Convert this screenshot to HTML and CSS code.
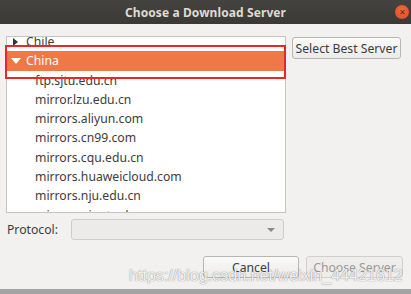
FILE: index.html
```html
<!DOCTYPE html>
<html lang="en">
<head>
    <meta charset="UTF-8">
    <title>Choose a Download Server</title>
    <link rel="stylesheet" href="styles.css">
</head>
<body>
    <div class="window">
        <div class="titlebar">
            <span class="title">Choose a Download Server</span>
            <span class="close">&#x2715;</span>
        </div>
        <div class="content">
            <div class="top-row">
                <div class="server-list">
                    <div class="rows">
                        <div class="row country"><span class="arrow right"></span>Chile</div>
                        <div class="row country selected"><span class="arrow down"></span>China</div>
                        <div class="row mirror">ftp.sjtu.edu.cn</div>
                        <div class="row mirror">mirror.lzu.edu.cn</div>
                        <div class="row mirror">mirrors.aliyun.com</div>
                        <div class="row mirror">mirrors.cn99.com</div>
                        <div class="row mirror">mirrors.cqu.edu.cn</div>
                        <div class="row mirror">mirrors.huaweicloud.com</div>
                        <div class="row mirror">mirrors.nju.edu.cn</div>
                        <div class="row mirror">mirrors.njupt.edu.cn</div>
                    </div>
                    <div class="highlight"></div>
                </div>
                <button class="btn best">Select Best Server</button>
            </div>
            <div class="protocol-row">
                <label class="protocol-label">Protocol:</label>
                <div class="combo"><span class="combo-arrow"></span></div>
            </div>
            <div class="button-row">
                <button class="btn cancel">Cancel</button>
                <button class="btn choose" disabled>Choose Server</button>
            </div>
            <div class="watermark">https://blog.csdn.net/weixin_44421612</div>
        </div>
        <div class="bottom-strip"></div>
    </div>
</body>
</html>
```

FILE: styles.css
```css
body {
    margin: 0;
    padding: 0;
    font-family: "Noto Sans", "Open Sans", sans-serif;
    font-size: 12.2px;
    color: #3c3c3c;
}

.window {
    width: 411px;
    height: 294px;
    background-color: #f2f1f0;
    display: flex;
    flex-direction: column;
    overflow: hidden;
}

.titlebar {
    height: 24px;
    background: linear-gradient(#44433f, #3a3935);
    display: flex;
    align-items: center;
    justify-content: center;
    position: relative;
    flex-shrink: 0;
}

.title {
    color: #dfdbd2;
    font-weight: bold;
    font-size: 12px;
    letter-spacing: 0.1px;
}

.close {
    position: absolute;
    right: 2px;
    top: 5px;
    width: 14px;
    height: 14px;
    border-radius: 50%;
    background: radial-gradient(circle at 50% 40%, #f26b3f, #e0491f);
    color: #5a2a1a;
    font-size: 8px;
    line-height: 14px;
    text-align: center;
}

.content {
    flex: 1;
    position: relative;
    padding: 12px 0 0 6px;
}

.top-row {
    display: flex;
    align-items: flex-start;
    gap: 6px;
}

.server-list {
    width: 278px;
    height: 175px;
    background-color: #fff;
    border: 1px solid #c6c4c1;
    position: relative;
}

.rows {
    height: 100%;
    overflow: hidden;
}

.row {
    height: 19.3px;
    line-height: 19px;
    white-space: nowrap;
}

.row:first-child {
    margin-top: -5px;
}

.country {
    padding-left: 4px;
    display: flex;
    align-items: center;
}

.mirror {
    padding-left: 28px;
}

.selected {
    background-color: #f07746;
    color: #fff;
}

.arrow {
    width: 0;
    height: 0;
    margin-right: 6px;
}

.arrow.right {
    border-top: 4px solid transparent;
    border-bottom: 4px solid transparent;
    border-left: 5px solid #333;
    margin-left: 2px;
    margin-right: 8px;
}

.arrow.down {
    border-left: 5px solid transparent;
    border-right: 5px solid transparent;
    border-top: 6px solid #fff;
    margin-right: 5px;
    margin-top: 1px;
}

.highlight {
    position: absolute;
    left: -2px;
    top: 8px;
    width: 277px;
    height: 30px;
    border: 2px solid #e8262b;
}

.btn {
    font-family: "Noto Sans", "Open Sans", sans-serif;
    font-size: 12.2px;
    color: #3c3c3c;
    height: 22px;
    padding: 0;
    border: 1px solid #b8b6b2;
    border-radius: 3px;
    background: linear-gradient(#fafaf9, #ebeae8);
}

.best {
    width: 109px;
    margin-top: 1px;
}

.protocol-row {
    display: flex;
    align-items: center;
    margin-top: 6px;
    height: 21px;
}

.protocol-label {
    width: 64px;
    padding-left: 1px;
}

.combo {
    width: 211px;
    height: 19px;
    border: 1px solid #cfcdca;
    border-radius: 3px;
    background-color: #ecebea;
    position: relative;
}

.combo-arrow {
    position: absolute;
    right: 8px;
    top: 8px;
    border-left: 4px solid transparent;
    border-right: 4px solid transparent;
    border-top: 4px solid #8a8a8a;
}

.button-row {
    display: flex;
    justify-content: flex-end;
    gap: 7px;
    margin-top: 16px;
    padding-right: 8px;
}

.cancel {
    width: 96px;
}

.choose {
    width: 97px;
    color: #9a9996;
    background: #eeedec;
    border-color: #d2d0cd;
}

.watermark {
    position: absolute;
    left: 129px;
    top: 242px;
    font-family: "Liberation Sans", Arial, sans-serif;
    font-size: 16.1px;
    color: rgba(255, 255, 255, 0.9);
    text-shadow: 0 0 1px rgba(110, 110, 110, 0.7), 0 0 1px rgba(110, 110, 110, 0.5);
    white-space: nowrap;
}

.bottom-strip {
    height: 5px;
    background-color: #a3a3a3;
    flex-shrink: 0;
}
```
